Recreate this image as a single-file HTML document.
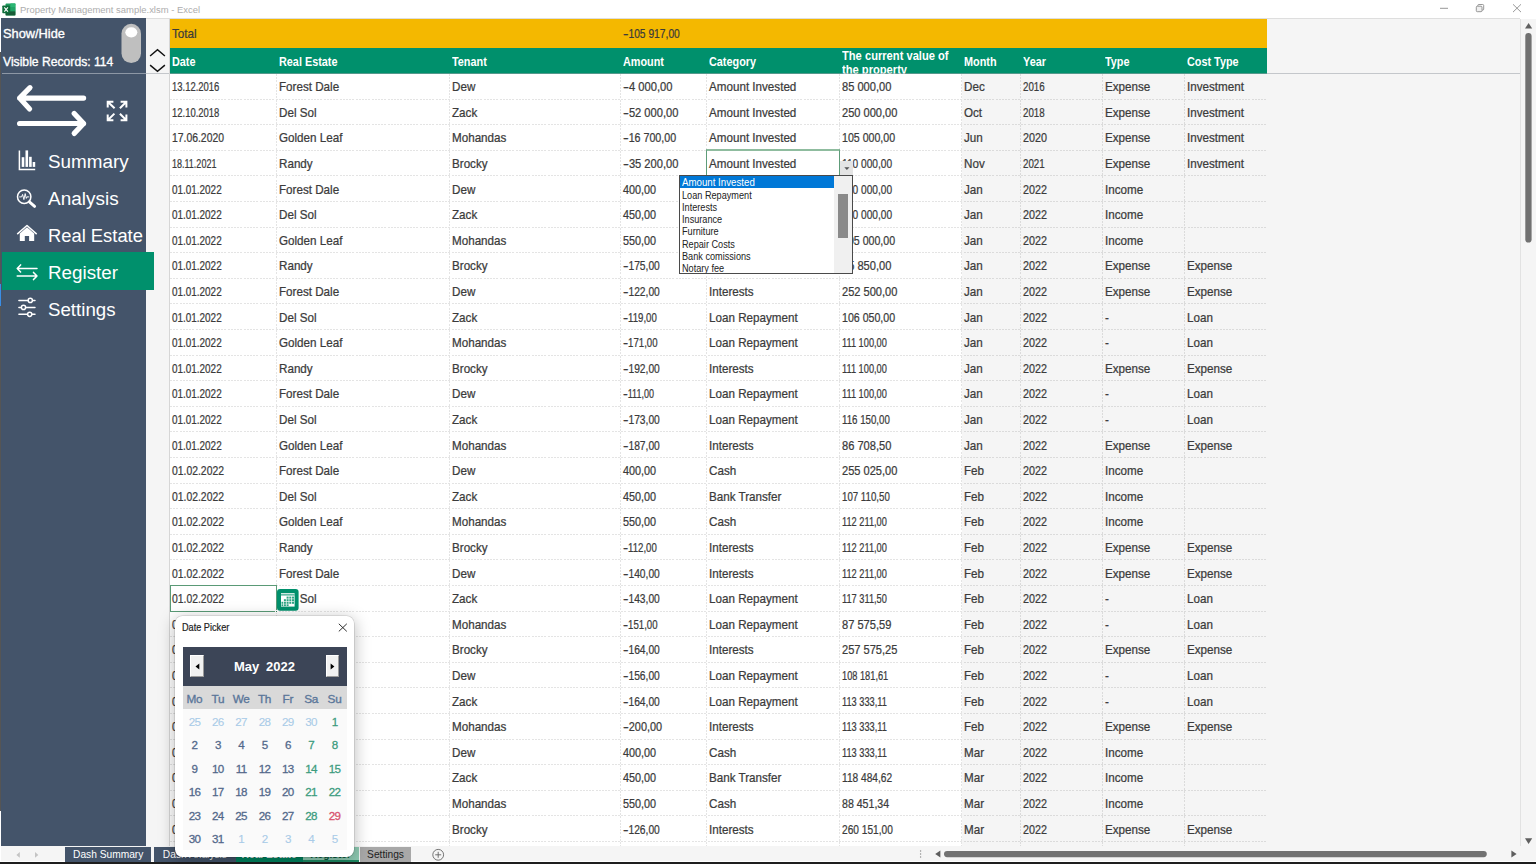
<!DOCTYPE html>
<html lang="en">
<head>
<meta charset="utf-8">
<title>Property Management sample.xlsm - Excel</title>
<style>
*{box-sizing:border-box;margin:0;padding:0}
html,body{width:1536px;height:864px;overflow:hidden;background:#fff}
body{position:relative;font-family:"Liberation Sans",sans-serif;font-size:12.2px;color:#3b3b3b}
i{font-style:normal;display:inline-block;transform-origin:0 50%;white-space:nowrap}
.abs{position:absolute}
/* title bar */
#title{position:absolute;left:0;top:0;width:1536px;height:18.5px;background:#fff}
#title .tt{position:absolute;left:19.5px;top:3.9px;font-size:9.7px;line-height:12px;color:#adadad;white-space:nowrap}
#title .tt i{transform:scaleX(.975)}
/* sheet */
#sheet{position:absolute;left:1.5px;top:18.4px;width:1518.5px;height:827.8px;background:#f5f5f5;overflow:hidden;border-top:1px solid #dedede}
#side{position:absolute;left:1.2px;top:18.4px;width:144.8px;height:827.2px;background:#44546a;color:#fff}
#ledge{position:absolute;left:0;top:52px;width:1.2px;height:759px;background:#555}
#ledge2{position:absolute;left:0;top:284px;width:1px;height:22px;background:#3a8ee6}
.sl{position:absolute;left:3px;font-size:12.8px;line-height:16px;white-space:nowrap;color:#fff;-webkit-text-stroke:.35px #fff}
.nav{position:absolute;left:48.4px;font-size:18px;line-height:22px;white-space:nowrap;color:#fff}
#reg{position:absolute;left:1.5px;top:252.1px;width:152.2px;height:37.6px;background:#00906c}
#fz{position:absolute;left:1.5px;top:73px;width:1518.5px;height:1px;background:#9aa0a8;opacity:.55}
/* table */
#tbl{position:absolute;left:170px;top:0;width:1096.5px;height:846.2px;overflow:hidden}
#white{position:absolute;left:0;top:73.5px;width:791.5px;height:780px;background:#fff}
#total{position:absolute;left:0;top:19px;width:1096.5px;height:29px;background:#f4b800}
#head{position:absolute;left:0;top:48px;width:1096.5px;height:25.5px;background:#00906c;color:#fff;font-weight:bold;overflow:hidden}
.r{position:absolute;left:0;width:1096.5px;height:25.6px;line-height:25.6px;background:repeating-linear-gradient(90deg,rgba(0,0,0,.105) 0 2px,transparent 2px 3.2px) 0 100%/100% 1px no-repeat}
.c{position:absolute;top:1.1px;white-space:nowrap}
.c i{-webkit-text-stroke:.24px #3b3b3b}
i.t{transform:scaleX(.955)}
i.hy{transform:scaleX(1.6);margin-right:2.4px}
.c0{left:2.3px}
.c1{left:108.8px}
.c2{left:281.8px}
.c3{left:452.8px}
.c4{left:538.8px}
.c5{left:671.8px}
.c6{left:793.8px}
.c7{left:852.8px}
.c8{left:934.8px}
.c9{left:1016.8px}
.vl{position:absolute;top:73.5px;width:1px;height:780px;background:repeating-linear-gradient(180deg,rgba(0,0,0,.105) 0 2px,transparent 2px 3.2px)}
.h{position:absolute;top:1.1px;line-height:26px;white-space:nowrap}
.h i{transform:scaleX(.89)}
/* selection */
.selb{position:absolute;border:1.4px solid #5a9a76;background:transparent}
/* dropdown */
#ddb{position:absolute;left:840.2px;top:161.2px;width:12.5px;height:14.2px;background:#e4e4e4}
#list{position:absolute;left:679.3px;top:175px;width:173.6px;height:99.4px;background:#fff;border:1px solid #4a4a4a;overflow:hidden;font-size:10px;color:#222}
.li{position:absolute;left:0;width:153.6px;height:12.27px;line-height:12.3px;padding-left:1.8px;white-space:nowrap}
.li i{transform:scaleX(.915)}
.li.sel{background:#0078d7;color:#fff;height:12.3px;line-height:13.6px}
.li.sel i{transform:scaleX(.97)}
#lsb{position:absolute;right:0;top:0;width:17.5px;height:100%;background:#f0f0f0}
#lth{position:absolute;left:838.4px;top:194.2px;width:10px;height:44.1px;background:#8a8a8a}
/* date picker */
#dp{position:absolute;left:175px;top:616px;width:179.4px;height:241.2px;background:#fff;border-radius:7.5px;box-shadow:0 0 0 .6px rgba(0,0,0,.16),0 3px 16px 1px rgba(0,0,0,.26);font-family:"Liberation Sans",sans-serif}
#dp .ttl{position:absolute;left:6.5px;top:5.8px;-webkit-text-stroke:.2px #222;font-size:10px;line-height:12px;color:#222}
#dp .ttl i{transform:scaleX(.915)}
#dph{position:absolute;left:8.1px;top:31.3px;width:163.7px;height:38.9px;background:#3c4557}
.nb{position:absolute;top:7.3px;width:13.2px;height:22.6px;background:#f1f1f1;border:1px solid #fff;border-right-color:#9a9a9a;border-bottom-color:#9a9a9a}
#dpw{position:absolute;left:8.1px;top:70.2px;width:163.7px;height:23.2px;background:#d9d9d9}
#dpg{position:absolute;left:8.1px;top:93.4px;width:163.7px;height:140.6px;background:#fafafa}
.my{position:absolute;top:43.2px;font-size:13.4px;line-height:16px;font-weight:bold;color:#fff;white-space:nowrap}
.wd{position:absolute;top:74.6px;width:24px;text-align:center;font-size:11.8px;line-height:16px;color:#5a7699;font-weight:normal;letter-spacing:-.3px;-webkit-text-stroke:.33px currentColor}
.dy{position:absolute;width:24px;height:16px;text-align:center;font-size:11.6px;line-height:16px;color:#52688a;font-weight:normal;letter-spacing:-.7px;-webkit-text-stroke:.28px currentColor}
.dy.o{color:#a9cbe8;-webkit-text-stroke:.1px currentColor}
.dy.w{color:#3c9c7e}
.dy.x{color:#d8506c}
/* bottom */
#tabs{position:absolute;left:1.2px;top:846.4px;width:1536px;height:14.7px;background:#f5f5f5}
#bot{position:absolute;left:0;top:862.2px;width:1536px;height:1.8px;background:#1e1e1e}
.tab{position:absolute;top:847.2px;height:15px;font-size:10.8px;line-height:14.6px;text-align:center;white-space:nowrap;overflow:hidden}
.tab i{transform:scaleX(.945);transform-origin:50% 50%}
#vsb{position:absolute;left:1520px;top:18.5px;width:16px;height:827.7px;background:#f5f5f5;border-left:1px solid #e2e2e2}
</style>
</head>
<body>
<!-- title bar -->
<div id="title">
<svg class="abs" style="left:2px;top:2.5px" width="14" height="13" viewBox="0 0 14 13">
<rect x="3.6" y=".4" width="9.8" height="12" rx=".8" fill="#1e9c5f"/>
<rect x="8.5" y=".4" width="4.9" height="4" fill="#2bb673"/>
<rect x="3.6" y="4.4" width="4.9" height="4" fill="#107c41"/>
<rect x="8.5" y="4.4" width="4.9" height="4" fill="#21a366"/>
<rect x="3.6" y="8.4" width="9.8" height="4" fill="#185c37"/>
<rect x=".3" y="2.6" width="7.6" height="7.6" rx=".7" fill="#0e6e3a"/>
<path d="M2.3 4.3L5.9 8.6M5.9 4.3L2.3 8.6" stroke="#fff" stroke-width="1.1" fill="none"/>
</svg>
<div class="tt"><i>Property Management sample.xlsm - Excel</i></div>
<svg class="abs" style="left:1436px;top:0" width="100" height="18" viewBox="0 0 100 18" fill="none" stroke="#8c8c8c" stroke-width=".9">
<path d="M4 8.3H12"/>
<rect x="40.3" y="6.2" width="5.7" height="5.5" rx="1" fill="#f0f0f0"/>
<path d="M41.8 6.2V5.5a1 1 0 0 1 1-1h3.9a1 1 0 0 1 1 1v3.6a1 1 0 0 1-1 1h-.7"/>
<path d="M77 4.3l8 7.8M85 4.3l-8 7.8"/>
</svg>
</div>

<!-- sheet background -->
<div id="sheet"></div>
<div id="vsb">
<svg class="abs" style="left:-1px;top:0" width="16" height="828" viewBox="0 0 16 828">
<path d="M5 9.4L8.6 3.9l3.6 5.5z" fill="#606060"/>
<rect x="5.3" y="13.9" width="6.3" height="209.6" rx="3.1" fill="#717171"/>
<path d="M5 819.3L8.6 824.9l3.6-5.6z" fill="#606060"/>
</svg>
</div>

<!-- table -->
<div id="tbl">
<div id="white"></div>
<div class="vl" style="left:106.0px"></div><div class="vl" style="left:279.0px"></div><div class="vl" style="left:450.0px"></div><div class="vl" style="left:536.0px"></div><div class="vl" style="left:669.0px"></div><div class="vl" style="left:791.0px"></div><div class="vl" style="left:850.0px"></div><div class="vl" style="left:932.0px"></div><div class="vl" style="left:1014.0px"></div>
<div class="r" style="top:74.1px"><span class="c c0"><i style="transform:scaleX(0.776)">13.12.2016</i></span><span class="c c1"><i class="t">Forest Dale</i></span><span class="c c2"><i class="t">Dew</i></span><span class="c c3"><i style="transform:scaleX(0.917)"><i class="hy">-</i>4 000,00</i></span><span class="c c4"><i class="t">Amount Invested</i></span><span class="c c5"><i style="transform:scaleX(0.911)">85 000,00</i></span><span class="c c6"><i class="t">Dec</i></span><span class="c c7"><i style="transform:scaleX(0.800)">2016</i></span><span class="c c8"><i class="t">Expense</i></span><span class="c c9"><i class="t">Investment</i></span></div>
<div class="r" style="top:99.7px"><span class="c c0"><i style="transform:scaleX(0.776)">12.10.2018</i></span><span class="c c1"><i class="t">Del Sol</i></span><span class="c c2"><i class="t">Zack</i></span><span class="c c3"><i style="transform:scaleX(0.913)"><i class="hy">-</i>52 000,00</i></span><span class="c c4"><i class="t">Amount Invested</i></span><span class="c c5"><i style="transform:scaleX(0.908)">250 000,00</i></span><span class="c c6"><i class="t">Oct</i></span><span class="c c7"><i style="transform:scaleX(0.800)">2018</i></span><span class="c c8"><i class="t">Expense</i></span><span class="c c9"><i class="t">Investment</i></span></div>
<div class="r" style="top:125.3px"><span class="c c0"><i style="transform:scaleX(0.852)">17.06.2020</i></span><span class="c c1"><i class="t">Golden Leaf</i></span><span class="c c2"><i class="t">Mohandas</i></span><span class="c c3"><i style="transform:scaleX(0.875)"><i class="hy">-</i>16 700,00</i></span><span class="c c4"><i class="t">Amount Invested</i></span><span class="c c5"><i style="transform:scaleX(0.871)">105 000,00</i></span><span class="c c6"><i class="t">Jun</i></span><span class="c c7"><i style="transform:scaleX(0.885)">2020</i></span><span class="c c8"><i class="t">Expense</i></span><span class="c c9"><i class="t">Investment</i></span></div>
<div class="r" style="top:150.9px"><span class="c c0"><i style="transform:scaleX(0.739)">18.11.2021</i></span><span class="c c1"><i class="t">Randy</i></span><span class="c c2"><i class="t">Brocky</i></span><span class="c c3"><i style="transform:scaleX(0.913)"><i class="hy">-</i>35 200,00</i></span><span class="c c4"><i class="t">Amount Invested</i></span><span class="c c5"><i style="transform:scaleX(0.833)">110 000,00</i></span><span class="c c6"><i class="t">Nov</i></span><span class="c c7"><i style="transform:scaleX(0.800)">2021</i></span><span class="c c8"><i class="t">Expense</i></span><span class="c c9"><i class="t">Investment</i></span></div>
<div class="r" style="top:176.5px"><span class="c c0"><i style="transform:scaleX(0.814)">01.01.2022</i></span><span class="c c1"><i class="t">Forest Dale</i></span><span class="c c2"><i class="t">Dew</i></span><span class="c c3"><i style="transform:scaleX(0.889)">400,00</i></span><span class="c c4"><i class="t">Cash</i></span><span class="c c5"><i style="transform:scaleX(0.833)">110 000,00</i></span><span class="c c6"><i class="t">Jan</i></span><span class="c c7"><i style="transform:scaleX(0.885)">2022</i></span><span class="c c8"><i class="t">Income</i></span></div>
<div class="r" style="top:202.1px"><span class="c c0"><i style="transform:scaleX(0.814)">01.01.2022</i></span><span class="c c1"><i class="t">Del Sol</i></span><span class="c c2"><i class="t">Zack</i></span><span class="c c3"><i style="transform:scaleX(0.889)">450,00</i></span><span class="c c4"><i class="t">Bank Transfer</i></span><span class="c c5"><i style="transform:scaleX(0.833)">110 000,00</i></span><span class="c c6"><i class="t">Jan</i></span><span class="c c7"><i style="transform:scaleX(0.885)">2022</i></span><span class="c c8"><i class="t">Income</i></span></div>
<div class="r" style="top:227.7px"><span class="c c0"><i style="transform:scaleX(0.814)">01.01.2022</i></span><span class="c c1"><i class="t">Golden Leaf</i></span><span class="c c2"><i class="t">Mohandas</i></span><span class="c c3"><i style="transform:scaleX(0.889)">550,00</i></span><span class="c c4"><i class="t">Cash</i></span><span class="c c5"><i style="transform:scaleX(0.871)">105 000,00</i></span><span class="c c6"><i class="t">Jan</i></span><span class="c c7"><i style="transform:scaleX(0.885)">2022</i></span><span class="c c8"><i class="t">Income</i></span></div>
<div class="r" style="top:253.3px"><span class="c c0"><i style="transform:scaleX(0.814)">01.01.2022</i></span><span class="c c1"><i class="t">Randy</i></span><span class="c c2"><i class="t">Brocky</i></span><span class="c c3"><i style="transform:scaleX(0.842)"><i class="hy">-</i>175,00</i></span><span class="c c4"><i class="t">Interests</i></span><span class="c c5"><i style="transform:scaleX(0.911)">85 850,00</i></span><span class="c c6"><i class="t">Jan</i></span><span class="c c7"><i style="transform:scaleX(0.885)">2022</i></span><span class="c c8"><i class="t">Expense</i></span><span class="c c9"><i class="t">Expense</i></span></div>
<div class="r" style="top:278.9px"><span class="c c0"><i style="transform:scaleX(0.814)">01.01.2022</i></span><span class="c c1"><i class="t">Forest Dale</i></span><span class="c c2"><i class="t">Dew</i></span><span class="c c3"><i style="transform:scaleX(0.842)"><i class="hy">-</i>122,00</i></span><span class="c c4"><i class="t">Interests</i></span><span class="c c5"><i style="transform:scaleX(0.908)">252 500,00</i></span><span class="c c6"><i class="t">Jan</i></span><span class="c c7"><i style="transform:scaleX(0.885)">2022</i></span><span class="c c8"><i class="t">Expense</i></span><span class="c c9"><i class="t">Expense</i></span></div>
<div class="r" style="top:304.5px"><span class="c c0"><i style="transform:scaleX(0.814)">01.01.2022</i></span><span class="c c1"><i class="t">Del Sol</i></span><span class="c c2"><i class="t">Zack</i></span><span class="c c3"><i style="transform:scaleX(0.789)"><i class="hy">-</i>119,00</i></span><span class="c c4"><i class="t">Loan Repayment</i></span><span class="c c5"><i style="transform:scaleX(0.871)">106 050,00</i></span><span class="c c6"><i class="t">Jan</i></span><span class="c c7"><i style="transform:scaleX(0.885)">2022</i></span><span class="c c8"><i class="t">-</i></span><span class="c c9"><i class="t">Loan</i></span></div>
<div class="r" style="top:330.1px"><span class="c c0"><i style="transform:scaleX(0.814)">01.01.2022</i></span><span class="c c1"><i class="t">Golden Leaf</i></span><span class="c c2"><i class="t">Mohandas</i></span><span class="c c3"><i style="transform:scaleX(0.789)"><i class="hy">-</i>171,00</i></span><span class="c c4"><i class="t">Loan Repayment</i></span><span class="c c5"><i style="transform:scaleX(0.758)">111 100,00</i></span><span class="c c6"><i class="t">Jan</i></span><span class="c c7"><i style="transform:scaleX(0.885)">2022</i></span><span class="c c8"><i class="t">-</i></span><span class="c c9"><i class="t">Loan</i></span></div>
<div class="r" style="top:355.7px"><span class="c c0"><i style="transform:scaleX(0.814)">01.01.2022</i></span><span class="c c1"><i class="t">Randy</i></span><span class="c c2"><i class="t">Brocky</i></span><span class="c c3"><i style="transform:scaleX(0.842)"><i class="hy">-</i>192,00</i></span><span class="c c4"><i class="t">Interests</i></span><span class="c c5"><i style="transform:scaleX(0.758)">111 100,00</i></span><span class="c c6"><i class="t">Jan</i></span><span class="c c7"><i style="transform:scaleX(0.885)">2022</i></span><span class="c c8"><i class="t">Expense</i></span><span class="c c9"><i class="t">Expense</i></span></div>
<div class="r" style="top:381.3px"><span class="c c0"><i style="transform:scaleX(0.814)">01.01.2022</i></span><span class="c c1"><i class="t">Forest Dale</i></span><span class="c c2"><i class="t">Dew</i></span><span class="c c3"><i style="transform:scaleX(0.737)"><i class="hy">-</i>111,00</i></span><span class="c c4"><i class="t">Loan Repayment</i></span><span class="c c5"><i style="transform:scaleX(0.758)">111 100,00</i></span><span class="c c6"><i class="t">Jan</i></span><span class="c c7"><i style="transform:scaleX(0.885)">2022</i></span><span class="c c8"><i class="t">-</i></span><span class="c c9"><i class="t">Loan</i></span></div>
<div class="r" style="top:406.9px"><span class="c c0"><i style="transform:scaleX(0.814)">01.01.2022</i></span><span class="c c1"><i class="t">Del Sol</i></span><span class="c c2"><i class="t">Zack</i></span><span class="c c3"><i style="transform:scaleX(0.842)"><i class="hy">-</i>173,00</i></span><span class="c c4"><i class="t">Loan Repayment</i></span><span class="c c5"><i style="transform:scaleX(0.795)">116 150,00</i></span><span class="c c6"><i class="t">Jan</i></span><span class="c c7"><i style="transform:scaleX(0.885)">2022</i></span><span class="c c8"><i class="t">-</i></span><span class="c c9"><i class="t">Loan</i></span></div>
<div class="r" style="top:432.5px"><span class="c c0"><i style="transform:scaleX(0.814)">01.01.2022</i></span><span class="c c1"><i class="t">Golden Leaf</i></span><span class="c c2"><i class="t">Mohandas</i></span><span class="c c3"><i style="transform:scaleX(0.842)"><i class="hy">-</i>187,00</i></span><span class="c c4"><i class="t">Interests</i></span><span class="c c5"><i style="transform:scaleX(0.911)">86 708,50</i></span><span class="c c6"><i class="t">Jan</i></span><span class="c c7"><i style="transform:scaleX(0.885)">2022</i></span><span class="c c8"><i class="t">Expense</i></span><span class="c c9"><i class="t">Expense</i></span></div>
<div class="r" style="top:458.1px"><span class="c c0"><i style="transform:scaleX(0.852)">01.02.2022</i></span><span class="c c1"><i class="t">Forest Dale</i></span><span class="c c2"><i class="t">Dew</i></span><span class="c c3"><i style="transform:scaleX(0.889)">400,00</i></span><span class="c c4"><i class="t">Cash</i></span><span class="c c5"><i style="transform:scaleX(0.908)">255 025,00</i></span><span class="c c6"><i class="t">Feb</i></span><span class="c c7"><i style="transform:scaleX(0.885)">2022</i></span><span class="c c8"><i class="t">Income</i></span></div>
<div class="r" style="top:483.7px"><span class="c c0"><i style="transform:scaleX(0.852)">01.02.2022</i></span><span class="c c1"><i class="t">Del Sol</i></span><span class="c c2"><i class="t">Zack</i></span><span class="c c3"><i style="transform:scaleX(0.889)">450,00</i></span><span class="c c4"><i class="t">Bank Transfer</i></span><span class="c c5"><i style="transform:scaleX(0.795)">107 110,50</i></span><span class="c c6"><i class="t">Feb</i></span><span class="c c7"><i style="transform:scaleX(0.885)">2022</i></span><span class="c c8"><i class="t">Income</i></span></div>
<div class="r" style="top:509.3px"><span class="c c0"><i style="transform:scaleX(0.852)">01.02.2022</i></span><span class="c c1"><i class="t">Golden Leaf</i></span><span class="c c2"><i class="t">Mohandas</i></span><span class="c c3"><i style="transform:scaleX(0.889)">550,00</i></span><span class="c c4"><i class="t">Cash</i></span><span class="c c5"><i style="transform:scaleX(0.758)">112 211,00</i></span><span class="c c6"><i class="t">Feb</i></span><span class="c c7"><i style="transform:scaleX(0.885)">2022</i></span><span class="c c8"><i class="t">Income</i></span></div>
<div class="r" style="top:534.9px"><span class="c c0"><i style="transform:scaleX(0.852)">01.02.2022</i></span><span class="c c1"><i class="t">Randy</i></span><span class="c c2"><i class="t">Brocky</i></span><span class="c c3"><i style="transform:scaleX(0.789)"><i class="hy">-</i>112,00</i></span><span class="c c4"><i class="t">Interests</i></span><span class="c c5"><i style="transform:scaleX(0.758)">112 211,00</i></span><span class="c c6"><i class="t">Feb</i></span><span class="c c7"><i style="transform:scaleX(0.885)">2022</i></span><span class="c c8"><i class="t">Expense</i></span><span class="c c9"><i class="t">Expense</i></span></div>
<div class="r" style="top:560.5px"><span class="c c0"><i style="transform:scaleX(0.852)">01.02.2022</i></span><span class="c c1"><i class="t">Forest Dale</i></span><span class="c c2"><i class="t">Dew</i></span><span class="c c3"><i style="transform:scaleX(0.842)"><i class="hy">-</i>140,00</i></span><span class="c c4"><i class="t">Interests</i></span><span class="c c5"><i style="transform:scaleX(0.758)">112 211,00</i></span><span class="c c6"><i class="t">Feb</i></span><span class="c c7"><i style="transform:scaleX(0.885)">2022</i></span><span class="c c8"><i class="t">Expense</i></span><span class="c c9"><i class="t">Expense</i></span></div>
<div class="r" style="top:586.1px"><span class="c c0"><i style="transform:scaleX(0.852)">01.02.2022</i></span><span class="c c1"><i class="t">Del Sol</i></span><span class="c c2"><i class="t">Zack</i></span><span class="c c3"><i style="transform:scaleX(0.842)"><i class="hy">-</i>143,00</i></span><span class="c c4"><i class="t">Loan Repayment</i></span><span class="c c5"><i style="transform:scaleX(0.758)">117 311,50</i></span><span class="c c6"><i class="t">Feb</i></span><span class="c c7"><i style="transform:scaleX(0.885)">2022</i></span><span class="c c8"><i class="t">-</i></span><span class="c c9"><i class="t">Loan</i></span></div>
<div class="r" style="top:611.7px"><span class="c c0"><i style="transform:scaleX(0.852)">01.02.2022</i></span><span class="c c1"><i class="t">Golden Leaf</i></span><span class="c c2"><i class="t">Mohandas</i></span><span class="c c3"><i style="transform:scaleX(0.789)"><i class="hy">-</i>151,00</i></span><span class="c c4"><i class="t">Loan Repayment</i></span><span class="c c5"><i style="transform:scaleX(0.911)">87 575,59</i></span><span class="c c6"><i class="t">Feb</i></span><span class="c c7"><i style="transform:scaleX(0.885)">2022</i></span><span class="c c8"><i class="t">-</i></span><span class="c c9"><i class="t">Loan</i></span></div>
<div class="r" style="top:637.3px"><span class="c c0"><i style="transform:scaleX(0.852)">01.02.2022</i></span><span class="c c1"><i class="t">Randy</i></span><span class="c c2"><i class="t">Brocky</i></span><span class="c c3"><i style="transform:scaleX(0.842)"><i class="hy">-</i>164,00</i></span><span class="c c4"><i class="t">Interests</i></span><span class="c c5"><i style="transform:scaleX(0.908)">257 575,25</i></span><span class="c c6"><i class="t">Feb</i></span><span class="c c7"><i style="transform:scaleX(0.885)">2022</i></span><span class="c c8"><i class="t">Expense</i></span><span class="c c9"><i class="t">Expense</i></span></div>
<div class="r" style="top:662.9px"><span class="c c0"><i style="transform:scaleX(0.852)">01.02.2022</i></span><span class="c c1"><i class="t">Forest Dale</i></span><span class="c c2"><i class="t">Dew</i></span><span class="c c3"><i style="transform:scaleX(0.842)"><i class="hy">-</i>156,00</i></span><span class="c c4"><i class="t">Loan Repayment</i></span><span class="c c5"><i style="transform:scaleX(0.758)">108 181,61</i></span><span class="c c6"><i class="t">Feb</i></span><span class="c c7"><i style="transform:scaleX(0.885)">2022</i></span><span class="c c8"><i class="t">-</i></span><span class="c c9"><i class="t">Loan</i></span></div>
<div class="r" style="top:688.5px"><span class="c c0"><i style="transform:scaleX(0.852)">01.02.2022</i></span><span class="c c1"><i class="t">Del Sol</i></span><span class="c c2"><i class="t">Zack</i></span><span class="c c3"><i style="transform:scaleX(0.842)"><i class="hy">-</i>164,00</i></span><span class="c c4"><i class="t">Loan Repayment</i></span><span class="c c5"><i style="transform:scaleX(0.758)">113 333,11</i></span><span class="c c6"><i class="t">Feb</i></span><span class="c c7"><i style="transform:scaleX(0.885)">2022</i></span><span class="c c8"><i class="t">-</i></span><span class="c c9"><i class="t">Loan</i></span></div>
<div class="r" style="top:714.1px"><span class="c c0"><i style="transform:scaleX(0.852)">01.02.2022</i></span><span class="c c1"><i class="t">Golden Leaf</i></span><span class="c c2"><i class="t">Mohandas</i></span><span class="c c3"><i style="transform:scaleX(0.894)"><i class="hy">-</i>200,00</i></span><span class="c c4"><i class="t">Interests</i></span><span class="c c5"><i style="transform:scaleX(0.758)">113 333,11</i></span><span class="c c6"><i class="t">Feb</i></span><span class="c c7"><i style="transform:scaleX(0.885)">2022</i></span><span class="c c8"><i class="t">Expense</i></span><span class="c c9"><i class="t">Expense</i></span></div>
<div class="r" style="top:739.7px"><span class="c c0"><i style="transform:scaleX(0.852)">01.03.2022</i></span><span class="c c1"><i class="t">Forest Dale</i></span><span class="c c2"><i class="t">Dew</i></span><span class="c c3"><i style="transform:scaleX(0.889)">400,00</i></span><span class="c c4"><i class="t">Cash</i></span><span class="c c5"><i style="transform:scaleX(0.758)">113 333,11</i></span><span class="c c6"><i class="t">Mar</i></span><span class="c c7"><i style="transform:scaleX(0.885)">2022</i></span><span class="c c8"><i class="t">Income</i></span></div>
<div class="r" style="top:765.3px"><span class="c c0"><i style="transform:scaleX(0.852)">01.03.2022</i></span><span class="c c1"><i class="t">Del Sol</i></span><span class="c c2"><i class="t">Zack</i></span><span class="c c3"><i style="transform:scaleX(0.889)">450,00</i></span><span class="c c4"><i class="t">Bank Transfer</i></span><span class="c c5"><i style="transform:scaleX(0.833)">118 484,62</i></span><span class="c c6"><i class="t">Mar</i></span><span class="c c7"><i style="transform:scaleX(0.885)">2022</i></span><span class="c c8"><i class="t">Income</i></span></div>
<div class="r" style="top:790.9px"><span class="c c0"><i style="transform:scaleX(0.852)">01.03.2022</i></span><span class="c c1"><i class="t">Golden Leaf</i></span><span class="c c2"><i class="t">Mohandas</i></span><span class="c c3"><i style="transform:scaleX(0.889)">550,00</i></span><span class="c c4"><i class="t">Cash</i></span><span class="c c5"><i style="transform:scaleX(0.869)">88 451,34</i></span><span class="c c6"><i class="t">Mar</i></span><span class="c c7"><i style="transform:scaleX(0.885)">2022</i></span><span class="c c8"><i class="t">Income</i></span></div>
<div class="r" style="top:816.5px"><span class="c c0"><i style="transform:scaleX(0.852)">01.03.2022</i></span><span class="c c1"><i class="t">Randy</i></span><span class="c c2"><i class="t">Brocky</i></span><span class="c c3"><i style="transform:scaleX(0.842)"><i class="hy">-</i>126,00</i></span><span class="c c4"><i class="t">Interests</i></span><span class="c c5"><i style="transform:scaleX(0.833)">260 151,00</i></span><span class="c c6"><i class="t">Mar</i></span><span class="c c7"><i style="transform:scaleX(0.885)">2022</i></span><span class="c c8"><i class="t">Expense</i></span><span class="c c9"><i class="t">Expense</i></span></div>
<div class="r" style="top:842.1px"><span class="c c0"><i style="transform:scaleX(0.852)">01.03.2022</i></span><span class="c c1"><i class="t">Forest Dale</i></span><span class="c c2"><i class="t">Dew</i></span><span class="c c3"><i style="transform:scaleX(0.842)"><i class="hy">-</i>145,00</i></span><span class="c c4"><i class="t">Interests</i></span><span class="c c5"><i style="transform:scaleX(0.833)">114 466,44</i></span><span class="c c6"><i class="t">Mar</i></span><span class="c c7"><i style="transform:scaleX(0.885)">2022</i></span><span class="c c8"><i class="t">Expense</i></span><span class="c c9"><i class="t">Expense</i></span></div>
<div id="total"><span class="c c0" style="line-height:29px;top:1.15px"><i class="t">Total</i></span><span class="c c3" style="line-height:29px;top:1.15px"><i style="transform:scaleX(0.842)"><i class="hy">-</i>105 917,00</i></span></div>
<div id="head">
<span class="h c0"><i>Date</i></span><span class="h c1"><i>Real Estate</i></span><span class="h c2"><i>Tenant</i></span><span class="h c3"><i>Amount</i></span><span class="h c4"><i>Category</i></span>
<span class="h c5" style="line-height:14.6px;top:.5px"><i style="transform:scaleX(.915)">The current value of<br>the property</i></span>
<span class="h c6"><i>Month</i></span><span class="h c7"><i>Year</i></span><span class="h c8"><i>Type</i></span><span class="h c9"><i>Cost Type</i></span>
</div>
</div>

<!-- frozen pane line + row-col header -->
<div id="fz"></div>
<div class="abs" style="left:169px;top:19px;width:1px;height:827px;background:#d6d6d6"></div>
<svg class="abs" style="left:146px;top:44px" width="24" height="32" viewBox="0 0 24 32" fill="none" stroke="#111" stroke-width="1.45">
<path d="M4.1 12L11.5 5.7 18.9 12M4.1 21.1L11.5 27.4 18.9 21.1"/>
</svg>

<!-- sidebar -->
<div id="ledge"></div><div id="ledge2"></div>
<div id="side"></div>
<div class="abs" style="left:1.5px;top:73px;width:144.5px;height:1px;background:#8d97a5"></div>
<div id="reg"></div>
<div class="sl" style="top:25.6px"><i style="transform:scaleX(1)">Show/Hide</i></div>
<div class="sl" style="top:53.5px"><i style="transform:scaleX(.95)">Visible Records: 114</i></div>
<svg class="abs" style="left:0;top:18px" width="160" height="310" viewBox="0 18 160 310" fill="none" stroke="#fff" stroke-linecap="round" stroke-linejoin="round">
<!-- toggle -->
<rect x="121.5" y="23.8" width="19.5" height="39.2" rx="9.75" fill="#bfbfbf" stroke="none"/>
<ellipse cx="131.3" cy="32.3" rx="6" ry="5.1" fill="#fff" stroke="none"/>
<!-- big arrows -->
<g stroke-width="5.2">
<path d="M83.6 98.1H19.6M30 87.7L19.6 98.1 29.6 108.9"/>
<path d="M19.6 123.5H83.6M74.2 113.5L83.6 123.5 74.2 133.4"/>
</g>
<!-- expand -->
<g stroke-width="2" stroke-linecap="butt" stroke-linejoin="miter">
<path d="M113.4 101.7H107.7V107.4M107.7 101.7L114.6 108.3"/>
<path d="M120.6 101.7H126.4V107.4M126.4 101.7L119.9 108.2"/>
<path d="M113.4 120.2H107.7V114.5M107.7 120.2L114.4 113.6"/>
<path d="M120.6 120.2H126.4V114.5M126.4 120.2L119.9 113.8"/>
</g>
<!-- summary icon -->
<g stroke-width="1.5" stroke-linecap="butt" stroke-linejoin="miter">
<path d="M19.4 150.4V169.5H35.2"/>
</g>
<g fill="#fff" stroke="none">
<rect x="21.7" y="157.2" width="2.6" height="9.7"/>
<rect x="25.5" y="150.4" width="2.6" height="16.5"/>
<rect x="29.1" y="156.8" width="2.6" height="10.1"/>
<rect x="32.7" y="162" width="2.5" height="4.9"/>
</g>
<!-- analysis icon -->
<circle cx="24.2" cy="196.8" r="6.7" stroke-width="1.5"/>
<path d="M29.4 201.9L34.6 206.4" stroke-width="2.9"/>
<path d="M19.6 196.9H21.6L22.6 194.4 23.9 199.6 25.2 193.6 26.3 198.4 27 196.9H28.9" stroke-width=".95"/>
<!-- house -->
<path d="M17.2 234.1L27 225.5 36.7 234.1" stroke-width="1.5" stroke-linecap="butt"/>
<path d="M19.8 233.6L27 227.3 34.2 233.6V241.1H29.1V236H24.8V241.1H19.8Z" fill="#fff" stroke="none"/>
<!-- register icon -->
<g stroke-width="1.5">
<path d="M37 268.4H17.2M20.6 264.9L17.2 268.4 20.6 272"/>
<path d="M17.2 276H37M33.5 272.4L37 276 33.5 279.6"/>
</g>
<!-- settings icon -->
<g stroke-width="1.45">
<path d="M18.9 300.4H28M32.6 300.4H35M18.9 307.4H21.2M25.8 307.4H35M18.9 314.3H27.4M32 314.3H35"/>
<circle cx="30.3" cy="300.4" r="2.1"/><circle cx="23.5" cy="307.4" r="2.1"/><circle cx="29.7" cy="314.3" r="2.1"/>
</g>
</svg>
<div class="nav" style="top:150.9px"><i style="transform:scaleX(1.047)">Summary</i></div>
<div class="nav" style="top:187.55px"><i style="transform:scaleX(1.054)">Analysis</i></div>
<div class="nav" style="top:224.65px"><i style="transform:scaleX(1.02)">Real Estate</i></div>
<div class="nav" style="top:261.55px"><i style="transform:scaleX(1.045)">Register</i></div>
<div class="nav" style="top:298.55px"><i style="transform:scaleX(1.038)">Settings</i></div>

<!-- category cell selection + dropdown -->
<div class="selb" style="left:705.8px;top:149px;width:134.6px;height:26.6px;border-color:#5e9c79;border-top:2px solid #8fbc9f;border-width:2px 1.3px 1.3px 1.3px"></div>
<div id="ddb"><svg class="abs" style="left:3.4px;top:5.8px" width="6" height="4" viewBox="0 0 6 4"><path d="M.3.3h5.2L2.9 3.1z" fill="#555"/></svg></div>
<div id="list"><div class="li sel" style="top:0.00px"><i>Amount Invested</i></div><div class="li" style="top:13.57px"><i>Loan Repayment</i></div><div class="li" style="top:25.84px"><i>Interests</i></div><div class="li" style="top:38.11px"><i>Insurance</i></div><div class="li" style="top:50.38px"><i>Furniture</i></div><div class="li" style="top:62.65px"><i>Repair Costs</i></div><div class="li" style="top:74.92px"><i>Bank comissions</i></div><div class="li" style="top:87.19px"><i>Notary fee</i></div><div id="lsb"></div></div>
<div id="lth"></div>

<!-- date cell selection + calendar button -->
<div class="selb" style="left:169.8px;top:584.9px;width:107.4px;height:27px;background:#fff"></div>
<div class="abs" style="left:172.3px;top:586.9px;line-height:25.6px;white-space:nowrap"><span class="c" style="position:static"><i style="transform:scaleX(0.852)">01.02.2022</i></span></div>
<div class="abs" style="left:274.6px;top:609.6px;width:3.6px;height:3.6px;background:#2f7d57;border:.6px solid #fff"></div>
<svg class="abs" style="left:276.6px;top:589px" width="22" height="22" viewBox="0 0 22 22">
<rect x="0" y="0" width="21.6" height="21.8" rx="3" fill="#00906c"/>
<rect x="4" y="4.2" width="13.6" height="13.4" fill="#fff"/>
<rect x="4" y="5.4" width="13.6" height="1" fill="#00906c"/>
<g fill="#2da583">
<rect x="9.6" y="7.6" width="2" height="2"/><rect x="12.3" y="7.6" width="2" height="2"/><rect x="15" y="7.6" width="2" height="2"/>
<rect x="6.9" y="10.2" width="2" height="2"/><rect x="9.6" y="10.2" width="2" height="2"/><rect x="12.3" y="10.2" width="2" height="2"/><rect x="15" y="10.2" width="2" height="2"/>
<rect x="4.5" y="12.8" width="1.7" height="2"/><rect x="6.9" y="12.8" width="2" height="2"/><rect x="9.6" y="12.8" width="2" height="2"/><rect x="12.3" y="12.8" width="2" height="2"/><rect x="15" y="12.8" width="2" height="2"/>
<rect x="4.5" y="15.3" width="1.7" height="1.8"/><rect x="6.9" y="15.3" width="2" height="1.8"/><rect x="9.6" y="15.3" width="2" height="1.8"/>
</g>
</svg>

<!-- bottom tab bar -->
<div id="tabs"></div>
<svg class="abs" style="left:0;top:846px" width="60" height="16" viewBox="0 0 60 16" fill="#c4c4c4"><path d="M19.8 6v5.8L16.4 8.9zM35 6v5.8L38.3 8.9z"/></svg>
<div class="tab" style="left:65px;width:86.4px;background:#44546a;color:#fff"><i>Dash Summary</i></div>
<div class="tab" style="left:153.6px;width:82.4px;background:#44546a;color:#fff"><i>Dash Analysis</i></div>
<div class="tab" style="left:236px;width:67px;background:#00835f;color:#fff;font-weight:bold"><i>Real Estate</i></div>
<div class="tab" style="left:303px;width:55.5px;background:#8ecab2;color:#0b5c40;font-weight:bold;border-bottom:2px solid #1d8a63"><i>Register</i></div>
<div class="tab" style="left:360px;width:51px;background:#a8a8a8;color:#222"><i>Settings</i></div>
<svg class="abs" style="left:431px;top:848px" width="14" height="14" viewBox="0 0 14 14" fill="none" stroke="#666" stroke-width=".9"><circle cx="7.2" cy="6.8" r="5.4"/><path d="M4.2 6.8h6M7.2 3.8v6"/></svg>
<svg class="abs" style="left:910px;top:846px" width="626" height="16" viewBox="0 0 626 16">
<g fill="#8e8e8e"><circle cx="10.6" cy="5" r=".7"/><circle cx="10.6" cy="8" r=".7"/><circle cx="10.6" cy="11" r=".7"/></g>
<path d="M30.4 4.6v7L25.2 8.1z" fill="#5e5e5e"/>
<rect x="34" y="5" width="542.8" height="6.2" rx="3.1" fill="#717171"/>
<path d="M601.4 4.6v7l5.2-3.5z" fill="#5e5e5e"/>
</svg>
<div id="bot"></div>

<!-- date picker popup -->
<div id="dp">
<div class="ttl"><i>Date Picker</i></div>
<svg class="abs" style="left:162.6px;top:6.8px" width="10" height="10" viewBox="0 0 10 10"><path d="M.8.8l8 7.6M8.8.8l-8 7.6" stroke="#222" stroke-width=".95" fill="none"/></svg>
<div id="dph">
<div class="nb" style="left:7.3px"><svg class="abs" style="left:3.4px;top:7.2px" width="5" height="7" viewBox="0 0 5 7"><path d="M4.3.4v6L.5 3.4z" fill="#000"/></svg></div>
<div class="nb" style="left:142.6px"><svg class="abs" style="left:3.6px;top:7.2px" width="5" height="7" viewBox="0 0 5 7"><path d="M.6.4v6l3.8-3z" fill="#000"/></svg></div>
</div>
<div class="my" style="left:58.8px"><i style="transform:scaleX(.97)">May</i></div>
<div class="my" style="left:90.6px"><i style="transform:scaleX(.97)">2022</i></div>
<div id="dpw"></div>
<b class="wd" style="left:7.4px">Mo</b><b class="wd" style="left:30.8px">Tu</b><b class="wd" style="left:54.1px">We</b><b class="wd" style="left:77.5px">Th</b><b class="wd" style="left:100.8px">Fr</b><b class="wd" style="left:124.1px">Sa</b><b class="wd" style="left:147.5px">Su</b>
<div id="dpg"></div>
<b class="dy o" style="left:7.4px;top:97.8px">25</b><b class="dy o" style="left:30.8px;top:97.8px">26</b><b class="dy o" style="left:54.1px;top:97.8px">27</b><b class="dy o" style="left:77.5px;top:97.8px">28</b><b class="dy o" style="left:100.8px;top:97.8px">29</b><b class="dy o" style="left:124.1px;top:97.8px">30</b><b class="dy w" style="left:147.5px;top:97.8px">1</b><b class="dy " style="left:7.4px;top:121.2px">2</b><b class="dy " style="left:30.8px;top:121.2px">3</b><b class="dy " style="left:54.1px;top:121.2px">4</b><b class="dy " style="left:77.5px;top:121.2px">5</b><b class="dy " style="left:100.8px;top:121.2px">6</b><b class="dy w" style="left:124.1px;top:121.2px">7</b><b class="dy w" style="left:147.5px;top:121.2px">8</b><b class="dy " style="left:7.4px;top:144.7px">9</b><b class="dy " style="left:30.8px;top:144.7px">10</b><b class="dy " style="left:54.1px;top:144.7px">11</b><b class="dy " style="left:77.5px;top:144.7px">12</b><b class="dy " style="left:100.8px;top:144.7px">13</b><b class="dy w" style="left:124.1px;top:144.7px">14</b><b class="dy w" style="left:147.5px;top:144.7px">15</b><b class="dy " style="left:7.4px;top:168.1px">16</b><b class="dy " style="left:30.8px;top:168.1px">17</b><b class="dy " style="left:54.1px;top:168.1px">18</b><b class="dy " style="left:77.5px;top:168.1px">19</b><b class="dy " style="left:100.8px;top:168.1px">20</b><b class="dy w" style="left:124.1px;top:168.1px">21</b><b class="dy w" style="left:147.5px;top:168.1px">22</b><b class="dy " style="left:7.4px;top:191.6px">23</b><b class="dy " style="left:30.8px;top:191.6px">24</b><b class="dy " style="left:54.1px;top:191.6px">25</b><b class="dy " style="left:77.5px;top:191.6px">26</b><b class="dy " style="left:100.8px;top:191.6px">27</b><b class="dy w" style="left:124.1px;top:191.6px">28</b><b class="dy x" style="left:147.5px;top:191.6px">29</b><b class="dy " style="left:7.4px;top:215.0px">30</b><b class="dy " style="left:30.8px;top:215.0px">31</b><b class="dy o" style="left:54.1px;top:215.0px">1</b><b class="dy o" style="left:77.5px;top:215.0px">2</b><b class="dy o" style="left:100.8px;top:215.0px">3</b><b class="dy o" style="left:124.1px;top:215.0px">4</b><b class="dy o" style="left:147.5px;top:215.0px">5</b>
</div>
</body>
</html>
